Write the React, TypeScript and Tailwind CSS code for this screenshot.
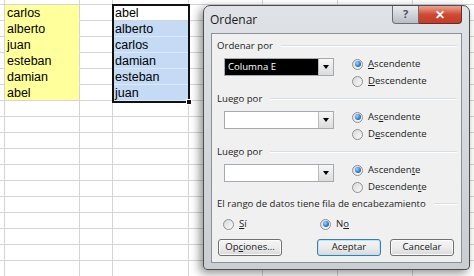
const COLS = 8;
const ROWS = 18;
const colD = ["carlos", "alberto", "juan", "esteban", "damian", "abel"];
const colE = ["abel", "alberto", "carlos", "damian", "esteban", "juan"];

function Cell({ r, c }: { r: number; c: number }) {
  let cls = "border-r border-b border-[#d4d4d4] bg-white";
  let text = "";
  if (c === 1 && r >= 1 && r <= 6) {
    cls = "border-r border-b border-r-[#d4d4d4] bg-[#ffff9c] " + (r < 6 ? "border-b-[#ffff9c]" : "border-b-[#d4d4d4]");
    text = colD[r - 1];
  }
  if (c === 3 && r >= 1 && r <= 6) {
    text = colE[r - 1];
    if (r > 1) cls = "border-r border-b border-[#dde9f8] bg-[#c4daf5]";
  }
  return (
    <div className={cls + " flex items-end overflow-hidden pl-[2px] text-[12.5px] leading-[13px] text-black"}>
      {text}
    </div>
  );
}

function Radio({ on }: { on?: boolean }) {
  return (
    <span className="flex size-[11px] shrink-0 items-center justify-center rounded-full border border-[#8e8f8f] bg-gradient-to-br from-[#d8d8d8] to-[#fbfbfb]">
      {on && <span className="size-[6px] rounded-full bg-[radial-gradient(circle_at_35%_35%,#9fd3ff,#1f66c0_70%)]" />}
    </span>
  );
}

function RadioRow({ on, children }: { on?: boolean; children: React.ReactNode }) {
  return (
    <div className="flex h-[17px] items-center gap-[5px]">
      <Radio on={on} />
      <span>{children}</span>
    </div>
  );
}

function Combo({ value }: { value?: string }) {
  return (
    <div className="flex h-[18px] w-[110px] border border-[#a5a9b0] bg-white">
      <div className={"flex flex-1 items-center pl-[3px] " + (value ? "bg-black text-white" : "")}>{value}</div>
      <div className="flex w-[15px] items-center justify-center border-l border-[#b7bac0] bg-gradient-to-b from-[#f7f7f7] to-[#dcdcdc]">
        <span className="border-x-[3.5px] border-t-[4px] border-x-transparent border-t-black" />
      </div>
    </div>
  );
}

function GroupLabel({ children }: { children: React.ReactNode }) {
  return (
    <div className="flex h-[14px] items-center gap-[8px] pl-[5px] pr-[4px]">
      <span className="whitespace-nowrap">{children}</span>
      <span className="h-0 flex-1 border-t border-b border-t-[#d5dfe5] border-b-white" />
    </div>
  );
}

function SortBlock({ label, value, asc, desc }: { label: string; value?: string; asc: React.ReactNode; desc: React.ReactNode }) {
  return (
    <div className="flex flex-col">
      <GroupLabel>{label}</GroupLabel>
      <div className="mt-[5px] flex h-[34px]">
        <div className="ml-[12px]">
          <Combo value={value} />
        </div>
        <div className="-mt-[2.5px] ml-[18px] flex flex-col">
          <RadioRow on>{asc}</RadioRow>
          <RadioRow>{desc}</RadioRow>
        </div>
      </div>
    </div>
  );
}

function Btn({ children, focus }: { children: React.ReactNode; focus?: boolean }) {
  return (
    <div
      className={
        "flex h-[17px] w-[64px] items-center justify-center rounded-[3px] border bg-gradient-to-b from-[#f4f4f4] via-[#ececec] to-[#d9d9d9] " +
        (focus ? "border-[#3d7bad] shadow-[inset_0_0_0_1px_#b9e3f7]" : "border-[#707070] shadow-[inset_0_0_0_1px_#fbfbfb]")
      }
    >
      {children}
    </div>
  );
}

export default function App() {
  return (
    <div className="relative h-[276px] w-[474px] overflow-hidden bg-white" style={{ fontFamily: '"Liberation Sans", Arial, sans-serif' }}>
      <div className="grid grid-cols-[5px_75px_33px_76px_74px_75px_75px_75px] grid-rows-[5px_repeat(17,16px)]">
        {Array.from({ length: ROWS }).map((_, r) =>
          Array.from({ length: COLS }).map((_, c) => <Cell key={r + "-" + c} r={r} c={c} />)
        )}
      </div>

      {/* selection */}
      <div className="absolute left-[112px] top-[4px] h-[99px] w-[78px] border-2 border-[#111]" />
      <div className="absolute left-[186px] top-[99px] size-[6px] border border-white bg-[#111]" />

      {/* dialog */}
      <div
        className="absolute left-[203px] top-[5px] flex h-[265px] w-[267px] flex-col rounded-t-[7px] rounded-b-[4px] border border-[#4d4d4d] bg-gradient-to-b from-[#dfe2e6] to-[#cacdd2] shadow-[-3px_3px_10px_rgba(0,0,0,0.45)]"
        style={{ fontFamily: '"Open Sans", "Noto Sans", sans-serif' }}
      >
        <div className="flex h-[27px] items-start">
          <span className="ml-[6px] mt-[5px] text-[12px] text-[#1a1a1a]">Ordenar</span>
          <div className="ml-auto mr-[7px] flex">
            <div className="flex h-[18px] w-[27px] items-center justify-center rounded-bl-[4px] border border-t-0 border-[#6b6f75] bg-gradient-to-b from-[#e9ecef] to-[#b9bec5] text-[11px] font-bold text-[#4b5058]">
              ?
            </div>
            <div className="flex h-[18px] w-[43px] items-center justify-center rounded-br-[4px] border border-l-0 border-t-0 border-[#6b2a22] bg-gradient-to-b from-[#e8a493] via-[#cf4a33] to-[#c23d2a] text-[12px] font-bold text-white">
              ✕
            </div>
          </div>
        </div>
        <div className="mx-[7px] mb-[6px] flex flex-1 flex-col border border-[#8b9096] bg-[#f0f0f0] pt-[5px] text-[9.6px] text-[#1e1e1e]">
          <SortBlock
            label="Ordenar por"
            value="Columna E"
            asc={<><u>A</u>scendente</>}
            desc={<><u>D</u>escendente</>}
          />
          <SortBlock
            label="Luego por"
            asc={<>As<u>c</u>endente</>}
            desc={<>D<u>e</u>scendente</>}
          />
          <SortBlock
            label="Luego por"
            asc={<>Ascenden<u>t</u>e</>}
            desc={<>Descenden<u>t</u>e</>}
          />
          <div className="-mt-[1px]">
            <GroupLabel>El rango de datos tiene fila de encabezamiento</GroupLabel>
          </div>
          <div className="mt-[5px] flex h-[16px] items-center">
            <div className="ml-[11px] w-[97px]">
              <RadioRow><u>S</u>í</RadioRow>
            </div>
            <RadioRow on>N<u>o</u></RadioRow>
          </div>
          <div className="mt-[7px] flex">
            <div className="ml-[6px]">
              <Btn>Op<u>c</u>iones...</Btn>
            </div>
            <div className="ml-[35px]">
              <Btn focus>Aceptar</Btn>
            </div>
            <div className="ml-[9px]">
              <Btn>Cancelar</Btn>
            </div>
          </div>
        </div>
      </div>
    </div>
  );
}
